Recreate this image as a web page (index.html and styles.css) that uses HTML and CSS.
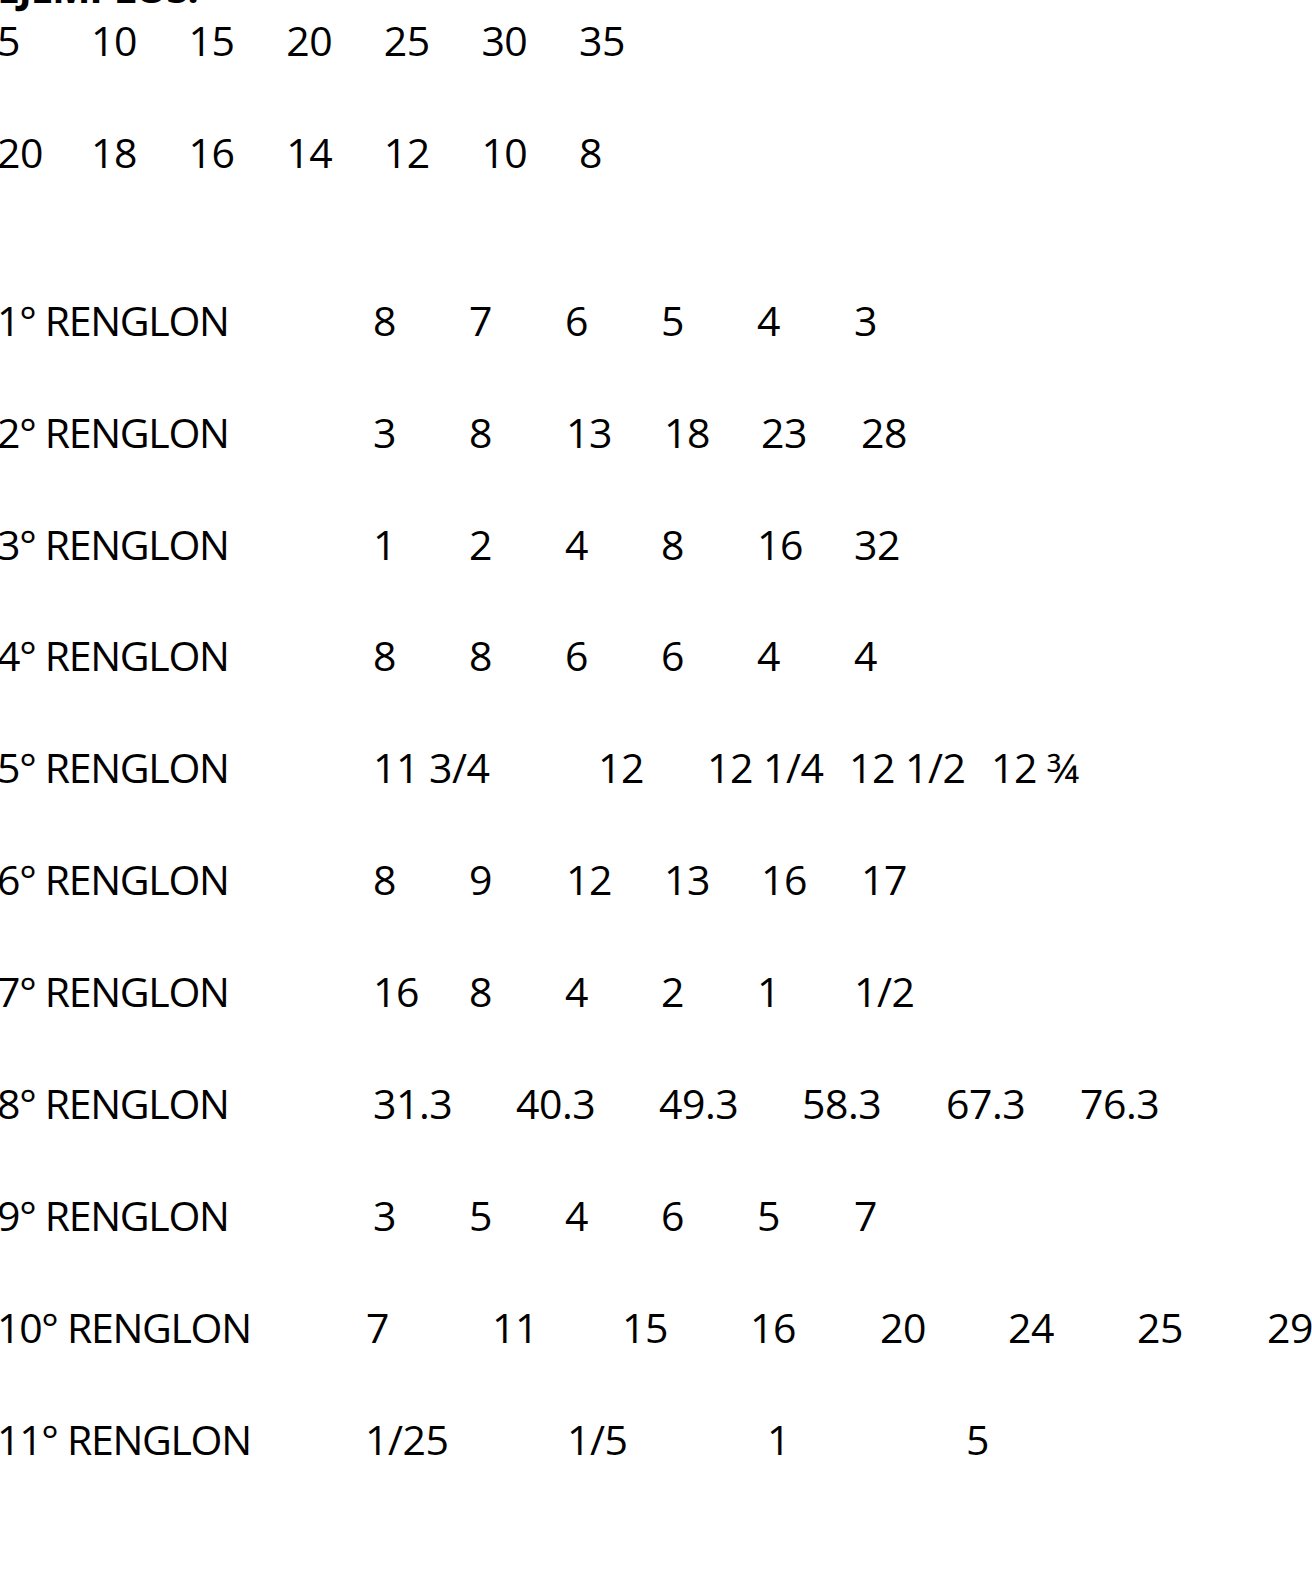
FILE: index.html
```html
<!DOCTYPE html>
<html lang="es">
<head>
<meta charset="utf-8">
<title>Ejemplos de renglones</title>
<link rel="stylesheet" href="styles.css">
</head>
<body>
<main class="doc">
  <h1 class="heading">EJEMPLOS:</h1>

  <div class="row seq">
    <span>5</span><span>10</span><span>15</span><span>20</span><span>25</span><span>30</span><span>35</span>
  </div>
  <div class="row seq gap1">
    <span>20</span><span>18</span><span>16</span><span>14</span><span>12</span><span>10</span><span>8</span>
  </div>

  <div class="row std gap2">
    <span class="label">1° RENGLON</span><span>8</span><span>7</span><span>6</span><span>5</span><span>4</span><span>3</span>
  </div>
  <div class="row std wide gap1">
    <span class="label">2° RENGLON</span><span>3</span><span>8</span><span>13</span><span>18</span><span>23</span><span>28</span>
  </div>
  <div class="row std gap1">
    <span class="label">3° RENGLON</span><span>1</span><span>2</span><span>4</span><span>8</span><span>16</span><span>32</span>
  </div>
  <div class="row std gap1">
    <span class="label">4° RENGLON</span><span>8</span><span>8</span><span>6</span><span>6</span><span>4</span><span>4</span>
  </div>
  <div class="row r5 gap1">
    <span class="label">5° RENGLON</span><span>11 3/4</span><span>12</span><span>12 1/4</span><span>12 1/2</span><span>12 ¾</span>
  </div>
  <div class="row std wide gap1">
    <span class="label">6° RENGLON</span><span>8</span><span>9</span><span>12</span><span>13</span><span>16</span><span>17</span>
  </div>
  <div class="row std gap1">
    <span class="label">7° RENGLON</span><span>16</span><span>8</span><span>4</span><span>2</span><span>1</span><span>1/2</span>
  </div>
  <div class="row r8 gap1">
    <span class="label">8° RENGLON</span><span>31.3</span><span>40.3</span><span>49.3</span><span>58.3</span><span>67.3</span><span>76.3</span>
  </div>
  <div class="row std gap1">
    <span class="label">9° RENGLON</span><span>3</span><span>5</span><span>4</span><span>6</span><span>5</span><span>7</span>
  </div>
  <div class="row r10 gap1">
    <span class="label">10° RENGLON</span><span>7</span><span>11</span><span>15</span><span>16</span><span>20</span><span>24</span><span>25</span><span>29</span>
  </div>
  <div class="row r11 gap1">
    <span class="label">11° RENGLON</span><span>1/25</span><span>1/5</span><span>1</span><span>5</span>
  </div>
</main>
</body>
</html>
```

FILE: styles.css
```css
html, body {
  margin: 0;
  padding: 0;
  background: #ffffff;
  overflow: hidden;
}

.doc {
  font-family: "Open Sans", "Liberation Sans", sans-serif;
  font-size: 41px;
  line-height: 55.95px;
  color: #000000;
  margin-top: -39px;
  margin-left: -3px;
  width: 1400px;
}

.heading {
  margin: 0;
  font-size: 41px;
  font-weight: 700;
  line-height: 52px;
  height: 52px;
  white-space: nowrap;
  letter-spacing: -1.5px;
}

.row {
  display: grid;
  white-space: nowrap;
  letter-spacing: -0.5px;
}

.label {
  letter-spacing: -1.3px;
}

.gap1 { margin-top: 55.95px; }
.gap2 { margin-top: 111.9px; }

.seq {
  grid-template-columns: 94px repeat(6, 97.6px);
}

.std {
  grid-template-columns: 376px 96px 96px 96px 96px 97px 96px;
}

.std.wide {
  grid-template-columns: 376px 96px 97px 98px 97px 100px 96px;
}

.r5 {
  grid-template-columns: 376px 225px 109px 142px 142px 142px;
}

.r8 {
  grid-template-columns: 376px 143px 143px 143px 144px 134px 140px;
}

.r10 {
  grid-template-columns: 369px 126px 130px 128px 130px 128px 129px 130px 80px;
}

.r11 {
  grid-template-columns: 368px 202px 200px 199px 100px;
}
```
